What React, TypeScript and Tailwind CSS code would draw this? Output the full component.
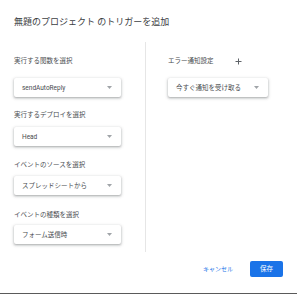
import React from "react";

const font = { fontFamily: 'Roboto, "Noto Sans CJK JP", sans-serif' };

function Select({ text, w }: { text: string; w: string }) {
  return (
    <div
      className={`${w} h-[19px] flex items-center justify-between pl-[8px] pr-[9px] bg-white rounded-[2px] shadow-[0_1px_2px_rgba(60,64,67,0.3),0_1px_3px_1px_rgba(60,64,67,0.15)]`}
    >
      <span className="text-[6.5px] leading-[8px] text-[#494c50] whitespace-nowrap">{text}</span>
      <svg width="5" height="3" viewBox="0 0 5 3">
        <path d="M0 0 L5 0 L2.5 3 Z" fill="#a0a4a8" />
      </svg>
    </div>
  );
}

function Label({ text, mt }: { text: string; mt: string }) {
  return (
    <div className={`${mt} h-[8px] leading-[8px] text-[6.5px] text-[#494c50] whitespace-nowrap`}>{text}</div>
  );
}

export default function App() {
  return (
    <div className="w-[300px] h-[294px] bg-white flex flex-col relative overflow-hidden" style={font}>
      <div className="pt-[17px] pl-[14px] h-[27px] text-[9px] leading-[10px] text-[#3c4043] whitespace-nowrap">
        無題のプロジェクト のトリガーを追加
      </div>
      <div className="mt-[15px] h-[210px] flex">
        <div className="w-[146px] pl-[14px] border-r border-[#e6e6e6] flex flex-col">
          <Label text="実行する関数を選択" mt="mt-[15px]" />
          <div className="mt-[13px]"><Select text="sendAutoReply" w="w-[107px]" /></div>
          <Label text="実行するデプロイを選択" mt="mt-[14px]" />
          <div className="mt-[8px]"><Select text="Head" w="w-[107px]" /></div>
          <Label text="イベントのソースを選択" mt="mt-[15px]" />
          <div className="mt-[7px]"><Select text="スプレッドシートから" w="w-[107px]" /></div>
          <Label text="イベントの種類を選択" mt="mt-[16px]" />
          <div className="mt-[6px]"><Select text="フォーム送信時" w="w-[107px]" /></div>
        </div>
        <div className="pl-[22px] flex flex-col">
          <div className="mt-[15px] h-[8px] flex items-center">
            <span className="text-[6.5px] leading-[8px] text-[#494c50] whitespace-nowrap">エラー通知設定</span>
            <svg className="ml-[21px]" width="7" height="7" viewBox="0 0 7 7">
              <path d="M3.5 0.5 V6.5 M0.5 3.5 H6.5" stroke="#5f6368" strokeWidth="1" />
            </svg>
          </div>
          <div className="mt-[13px]"><Select text="今すぐ通知を受け取る" w="w-[100px]" /></div>
        </div>
      </div>
      <div className="mt-[9px] flex items-center justify-end pr-[17px]">
        <span className="text-[6px] leading-[8px] text-[#1a73e8] mr-[17px]">キャンセル</span>
        <div className="w-[33px] h-[16px] rounded-[2px] bg-[#1a73e8] flex items-center justify-center text-white text-[6.5px] leading-[8px]">
          保存
        </div>
      </div>
      <div className="absolute left-0 bottom-0 w-[297px] h-[1px] bg-[#5a5a5a]" />
    </div>
  );
}
